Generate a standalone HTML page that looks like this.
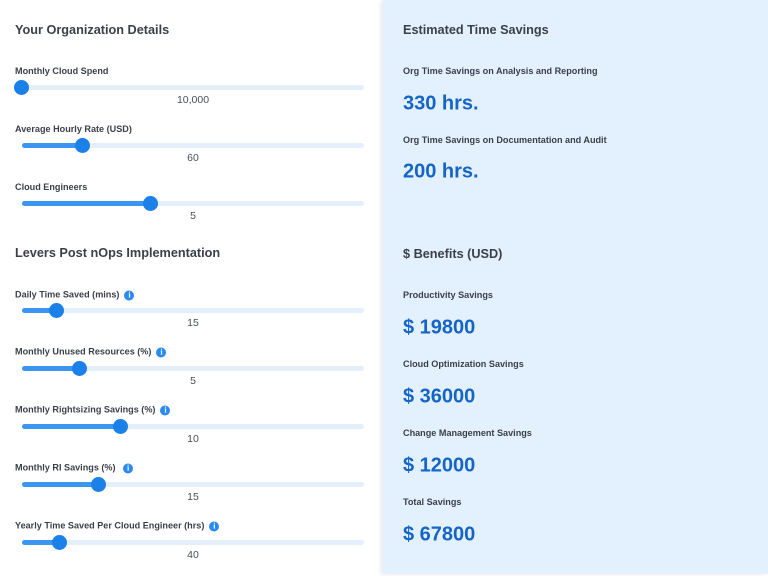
<!DOCTYPE html>
<html><head><style>
body{margin:0;width:768px;height:576px;background:#fff;font-family:"Liberation Sans",sans-serif;position:relative;overflow:hidden;color:#3b3f4a}
.a{position:absolute;white-space:nowrap}
.h{font-size:12.7px;font-weight:bold;transform:translateY(-50%)}
.l{font-size:9.1px;font-weight:bold;transform:translateY(-50%)}
.v{font-size:10.5px;color:#4a4e57;transform:translate(-50%,-50%);left:193px}
.n{font-size:20px;font-weight:bold;color:#1565c8;transform:translateY(-50%)}
.tr{position:absolute;left:22px;width:342px;height:5px;border-radius:3px;background:#e4effc;margin-top:-2.5px}
.f{position:absolute;left:0;top:0;height:5px;border-radius:3px;background:#3a96f0}
.th{position:absolute;width:15px;height:15px;border-radius:50%;background:#1b80e8;top:-5px;margin-left:-7.5px}
.i{display:inline-block;width:10px;height:10px;border-radius:50%;background:#2a8af0;color:#fff;font-size:8px;text-align:center;line-height:10px;margin-left:5px;vertical-align:0px;font-family:"Liberation Serif",serif;font-weight:bold}
#p{position:absolute;left:383px;top:0;width:385px;height:574px;background:#e3f0fe;box-shadow:-2px 0 5px rgba(0,0,0,.1)}
</style></head><body>
<div class="a h" style="left:15px;top:30px">Your Organization Details</div>
<div class="a l" style="left:15px;top:71px">Monthly Cloud Spend</div>
<div class="tr" style="top:87px"><div class="f" style="width:0"></div><div class="th" style="left:-1px"></div></div>
<div class="a v" style="top:100px">10,000</div>
<div class="a l" style="left:15px;top:129px">Average Hourly Rate (USD)</div>
<div class="tr" style="top:145px"><div class="f" style="width:60px"></div><div class="th" style="left:60px"></div></div>
<div class="a v" style="top:158px">60</div>
<div class="a l" style="left:15px;top:187px">Cloud Engineers</div>
<div class="tr" style="top:203px"><div class="f" style="width:128px"></div><div class="th" style="left:128px"></div></div>
<div class="a v" style="top:216px">5</div>

<div class="a h" style="left:15px;top:253px">Levers Post nOps Implementation</div>
<div class="a l" style="left:15px;top:295px">Daily Time Saved (mins)<span class="i">i</span></div>
<div class="tr" style="top:310px"><div class="f" style="width:34px"></div><div class="th" style="left:34px"></div></div>
<div class="a v" style="top:323px">15</div>
<div class="a l" style="left:15px;top:352px">Monthly Unused Resources (%)<span class="i">i</span></div>
<div class="tr" style="top:368px"><div class="f" style="width:57px"></div><div class="th" style="left:57px"></div></div>
<div class="a v" style="top:381px">5</div>
<div class="a l" style="left:15px;top:410px">Monthly Rightsizing Savings (%)<span class="i">i</span></div>
<div class="tr" style="top:426px"><div class="f" style="width:98px"></div><div class="th" style="left:98px"></div></div>
<div class="a v" style="top:439px">10</div>
<div class="a l" style="left:15px;top:468px">Monthly RI Savings (%)&nbsp;<span class="i">i</span></div>
<div class="tr" style="top:484px"><div class="f" style="width:76px"></div><div class="th" style="left:76px"></div></div>
<div class="a v" style="top:497px">15</div>
<div class="a l" style="left:15px;top:526px">Yearly Time Saved Per Cloud Engineer (hrs)<span class="i">i</span></div>
<div class="tr" style="top:542px"><div class="f" style="width:37px"></div><div class="th" style="left:37px"></div></div>
<div class="a v" style="top:555px">40</div>

<div id="p"></div>
<div class="a h" style="left:403px;top:30px">Estimated Time Savings</div>
<div class="a l" style="left:403px;top:71px">Org Time Savings on Analysis and Reporting</div>
<div class="a n" style="left:403px;top:104px">330 hrs.</div>
<div class="a l" style="left:403px;top:140px">Org Time Savings on Documentation and Audit</div>
<div class="a n" style="left:403px;top:172px">200 hrs.</div>
<div class="a h" style="left:403px;top:254px">$ Benefits (USD)</div>
<div class="a l" style="left:403px;top:295px">Productivity Savings</div>
<div class="a n" style="left:403px;top:328px">$ 19800</div>
<div class="a l" style="left:403px;top:364px">Cloud Optimization Savings</div>
<div class="a n" style="left:403px;top:397px">$ 36000</div>
<div class="a l" style="left:403px;top:433px">Change Management Savings</div>
<div class="a n" style="left:403px;top:466px">$ 12000</div>
<div class="a l" style="left:403px;top:502px">Total Savings</div>
<div class="a n" style="left:403px;top:535px">$ 67800</div>
</body></html>
